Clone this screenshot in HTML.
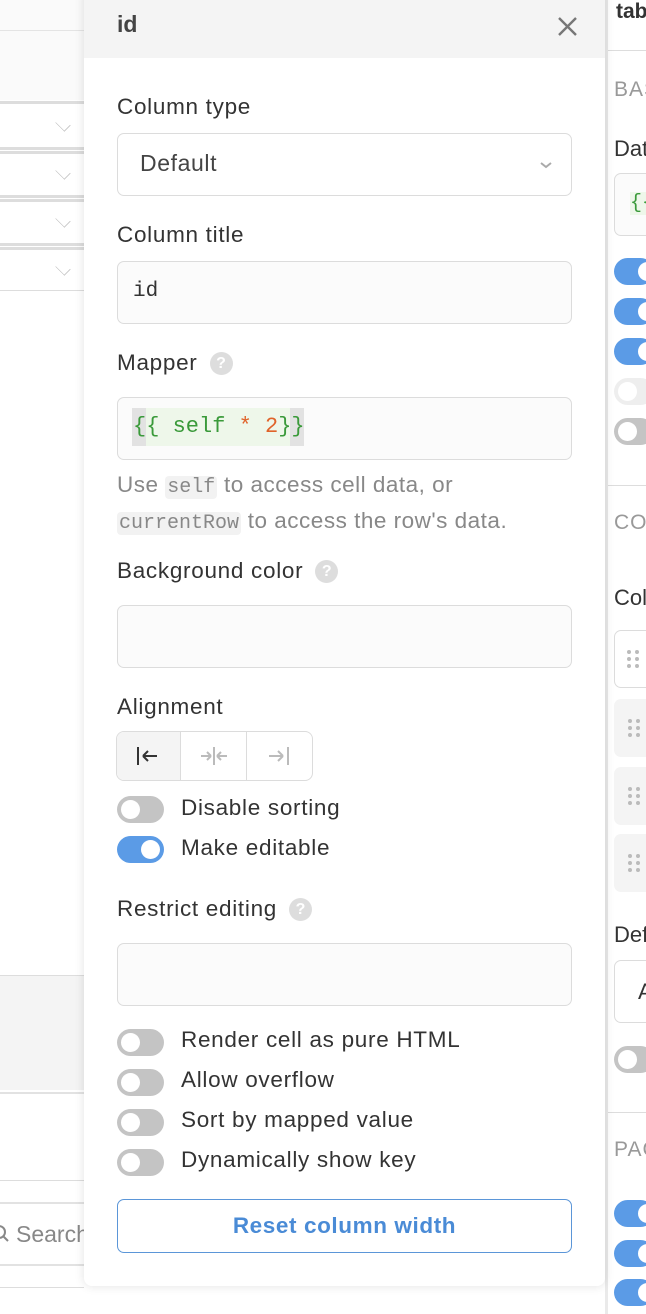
<!DOCTYPE html>
<html><head><meta charset="utf-8"><style>
*{box-sizing:border-box;margin:0;padding:0}
html,body{width:646px;height:1314px;overflow:hidden}
body{position:relative;background:#fff;font-family:"Liberation Sans",sans-serif;color:#333}
#w{position:absolute;left:0;top:0;width:646px;height:1314px;overflow:hidden}
.a{position:absolute;white-space:nowrap}
.lbl{position:absolute;left:117px;font-size:22.5px;letter-spacing:.7px;color:#333;white-space:nowrap}
.inp{position:absolute;left:117px;width:455px;height:63px;border:1.5px solid #dcdcdc;border-radius:7px;background:#fbfbfb}
.tg{position:absolute;width:47px;height:27px;border-radius:14px;background:#c4c4c4}
.tg::after{content:"";position:absolute;left:4px;top:4px;width:19px;height:19px;border-radius:50%;background:#fff}
.tg.on{background:#5b9be6}
.tg.on::after{left:24px}
.tl{position:absolute;left:181px;font-size:22.5px;letter-spacing:.7px;color:#333;white-space:nowrap}
.q{display:inline-block;width:23px;height:23px;border-radius:50%;background:#ddd;color:#fff;font-size:16px;font-weight:bold;text-align:center;line-height:23px;vertical-align:2px;margin-left:12px;letter-spacing:0}
.mono{font-family:"Liberation Mono",monospace}
.hl{position:absolute;left:0;width:84px;height:3px;background:#ddd}
.chev{position:absolute;left:55px;width:16px;height:16px;border-right:1.5px solid #bbb;border-bottom:1.5px solid #bbb;transform:rotate(45deg) scale(.8,.55)}
.rt{position:absolute;left:614px;height:27px;width:40px;border-radius:14px;background:#5b9be6}
.rt::after{content:"";position:absolute;left:24px;top:4px;width:19px;height:19px;border-radius:50%;background:#fff}
.rt.off{background:#c4c4c4}.rt.off::after{left:4px}
.rt.lt{background:#eee}
.drag{position:absolute;left:614px;width:40px;height:58px;background:#f4f4f4;border-radius:7px}
.drag span{position:absolute;left:14px;top:20px;width:4px;height:4px;border-radius:50%;background:#bbb;box-shadow:8px 0 #bbb,0 7px #bbb,8px 7px #bbb,0 14px #bbb,8px 14px #bbb}
</style></head><body><div id="w">
<!-- left -->
<div class="a" style="left:0;top:0;width:84px;height:100px;background:#fafafa"></div>
<div class="a" style="left:0;top:30px;width:84px;height:1px;background:#e4e4e4"></div>
<div class="hl" style="top:101px"></div>
<div class="hl" style="top:147px"></div><div class="hl" style="top:151px"></div>
<div class="hl" style="top:195px"></div><div class="hl" style="top:199px"></div>
<div class="hl" style="top:243px"></div><div class="hl" style="top:247px"></div>
<div class="a" style="left:0;top:290px;width:84px;height:1px;background:#ddd"></div>
<div class="chev" style="top:116px"></div><div class="chev" style="top:164px"></div><div class="chev" style="top:212px"></div><div class="chev" style="top:260px"></div>
<div class="a" style="left:0;top:975px;width:84px;height:1px;background:#ddd"></div>
<div class="a" style="left:0;top:976px;width:84px;height:114px;background:#f4f4f4"></div>
<div class="a" style="left:0;top:1092px;width:84px;height:2px;background:#e2e2e2"></div>
<div class="a" style="left:0;top:1180px;width:84px;height:1px;background:#ddd"></div>
<div class="a" style="left:0;top:1202px;width:84px;height:2px;background:#e2e2e2"></div>
<svg class="a" style="left:-6px;top:1224px" width="16" height="20" viewBox="0 0 16 20"><circle cx="5" cy="8" r="6" stroke="#888" stroke-width="2" fill="none"/><path d="M9 12L14 17" stroke="#888" stroke-width="2"/></svg>
<div class="a" style="left:16px;top:1221px;font-size:23px;color:#888">Search</div>
<div class="a" style="left:0;top:1264px;width:84px;height:2px;background:#e2e2e2"></div>
<div class="a" style="left:0;top:1287px;width:84px;height:1px;background:#ddd"></div>
<!-- right -->
<div class="a" style="left:605px;top:0;width:3px;height:1314px;background:#eaeaea"></div>
<div class="a" style="left:616px;top:0;font-size:21px;font-weight:bold;color:#333">table</div>
<div class="a" style="left:608px;top:50px;width:40px;height:1px;background:#ddd"></div>
<div class="a" style="left:614px;top:78px;font-size:21px;color:#999;letter-spacing:1px">BASIC</div>
<div class="a" style="left:614px;top:136px;font-size:22px;color:#333">Data</div>
<div class="a" style="left:614px;top:173px;width:40px;height:63px;border:1.5px solid #dcdcdc;border-radius:7px;background:#fbfbfb"></div>
<div class="a mono" style="left:630px;top:192px;font-size:20px;color:#3a9a3a;background:#eef7ea">{{</div>
<div class="rt" style="top:258px"></div><div class="rt" style="top:298px"></div><div class="rt" style="top:338px"></div>
<div class="rt off lt" style="top:378px"></div><div class="rt off" style="top:418px"></div>
<div class="a" style="left:608px;top:485px;width:40px;height:1px;background:#ddd"></div>
<div class="a" style="left:614px;top:511px;font-size:21px;color:#999;letter-spacing:1px">COLUMNS</div>
<div class="a" style="left:614px;top:585px;font-size:22px;color:#333">Columns</div>
<div class="drag" style="top:630px;background:#fff;border:1.5px solid #dcdcdc"><span style="left:12px;top:19px"></span></div>
<div class="drag" style="top:699px"><span></span></div>
<div class="drag" style="top:767px"><span></span></div>
<div class="drag" style="top:834px"><span></span></div>
<div class="a" style="left:614px;top:922px;font-size:22px;color:#333">Default</div>
<div class="a" style="left:614px;top:960px;width:40px;height:63px;border:1.5px solid #dcdcdc;border-radius:7px;background:#fff"></div>
<div class="a" style="left:638px;top:979px;font-size:22px;color:#333">A</div>
<div class="rt off" style="top:1046px"></div>
<div class="a" style="left:608px;top:1112px;width:40px;height:1px;background:#ddd"></div>
<div class="a" style="left:614px;top:1138px;font-size:21px;color:#999;letter-spacing:1px">PAGINATION</div>
<div class="rt" style="top:1200px"></div><div class="rt" style="top:1240px"></div><div class="rt" style="top:1279px"></div>
<!-- panel -->
<div class="a" style="left:84px;top:-10px;width:521px;height:1296px;background:#fff;border-radius:0 0 8px 8px;box-shadow:0 0 10px rgba(0,0,0,.12)"></div>
<div class="a" style="left:84px;top:0;width:521px;height:58px;background:#f4f4f4"></div>
<div class="a" style="left:117px;top:11px;font-size:23px;font-weight:bold;color:#444">id</div>
<svg class="a" style="left:557px;top:16px" width="21" height="21" viewBox="0 0 21 21"><path d="M2 2L19 19M19 2L2 19" stroke="#777" stroke-width="2.4"/></svg>

<div class="lbl" style="top:94px">Column type</div>
<div class="inp" style="top:133px;background:#fff"></div>
<div class="a" style="left:140px;top:150px;font-size:23px;letter-spacing:.6px;color:#444">Default</div>
<svg class="a" style="left:539px;top:160px" width="14" height="10" viewBox="0 0 14 10"><path d="M2 3L7 7L12 3" stroke="#aaa" stroke-width="2" fill="none"/></svg>

<div class="lbl" style="top:222px">Column title</div>
<div class="inp" style="top:261px"></div>
<div class="a mono" style="left:133px;top:280px;font-size:21px;color:#333">id</div>

<div class="lbl" style="top:350px">Mapper<span class="q">?</span></div>
<div class="inp" style="top:397px"></div>
<div class="a" style="left:132px;top:408px;height:38px;width:172px;background:#eef7ea;border-left:14px solid #e2e2e2;border-right:14px solid #e2e2e2"></div>
<div class="a mono" style="left:133px;top:414px;font-size:22px;color:#3a9a3a;white-space:pre">{{ self <span style="color:#e0632a">* 2</span>}}</div>
<div class="a" style="left:117px;top:468px;font-size:22.5px;letter-spacing:.5px;color:#888;line-height:33px;width:470px">Use <span class="mono" style="background:#f2f2f2;border-radius:4px;padding:0 2px;font-size:20px;letter-spacing:0">self</span> to access cell data, or<br><span class="mono" style="background:#f2f2f2;border-radius:4px;padding:0 2px;font-size:20px;letter-spacing:0">currentRow</span> to access the row's data.</div>

<div class="lbl" style="top:558px">Background color<span class="q">?</span></div>
<div class="inp" style="top:605px"></div>

<div class="lbl" style="top:694px">Alignment</div>
<div class="a" style="left:116px;top:731px;width:197px;height:50px;border:1.5px solid #dcdcdc;border-radius:8px;overflow:hidden;display:flex">
<div style="width:64px;background:#f4f4f4;border-right:1.5px solid #dcdcdc"></div>
<div style="width:66px;border-right:1.5px solid #dcdcdc"></div><div style="flex:1"></div></div>
<svg class="a" style="left:136px;top:745px" width="24" height="22" viewBox="0 0 24 22"><path d="M2 2V20M7 11H21M7 11L12 6M7 11L12 16" stroke="#333" stroke-width="2" fill="none"/></svg>
<svg class="a" style="left:200px;top:745px" width="28" height="22" viewBox="0 0 28 22"><path d="M14 2V20M1 11H11M11 11L7 7M11 11L7 15M27 11H17M17 11L21 7M17 11L21 15" stroke="#bbb" stroke-width="2" fill="none"/></svg>
<svg class="a" style="left:266px;top:745px" width="26" height="22" viewBox="0 0 26 22"><path d="M22 2V20M3 11H17M17 11L12 6M17 11L12 16" stroke="#bbb" stroke-width="2" fill="none"/></svg>

<div class="tg" style="left:117px;top:796px"></div><div class="tl" style="top:795px">Disable sorting</div>
<div class="tg on" style="left:117px;top:836px"></div><div class="tl" style="top:835px">Make editable</div>

<div class="lbl" style="top:896px">Restrict editing<span class="q">?</span></div>
<div class="inp" style="top:943px"></div>

<div class="tg" style="left:117px;top:1029px"></div><div class="tl" style="top:1027px">Render cell as pure HTML</div>
<div class="tg" style="left:117px;top:1069px"></div><div class="tl" style="top:1067px">Allow overflow</div>
<div class="tg" style="left:117px;top:1109px"></div><div class="tl" style="top:1107px">Sort by mapped value</div>
<div class="tg" style="left:117px;top:1149px"></div><div class="tl" style="top:1147px">Dynamically show key</div>

<div class="a" style="left:117px;top:1199px;width:455px;height:54px;border:1.5px solid #5b96d8;border-radius:7px;text-align:center;line-height:51px;font-size:22.5px;letter-spacing:.6px;font-weight:bold;color:#4a8bd6">Reset column width</div>
</div></body></html>
